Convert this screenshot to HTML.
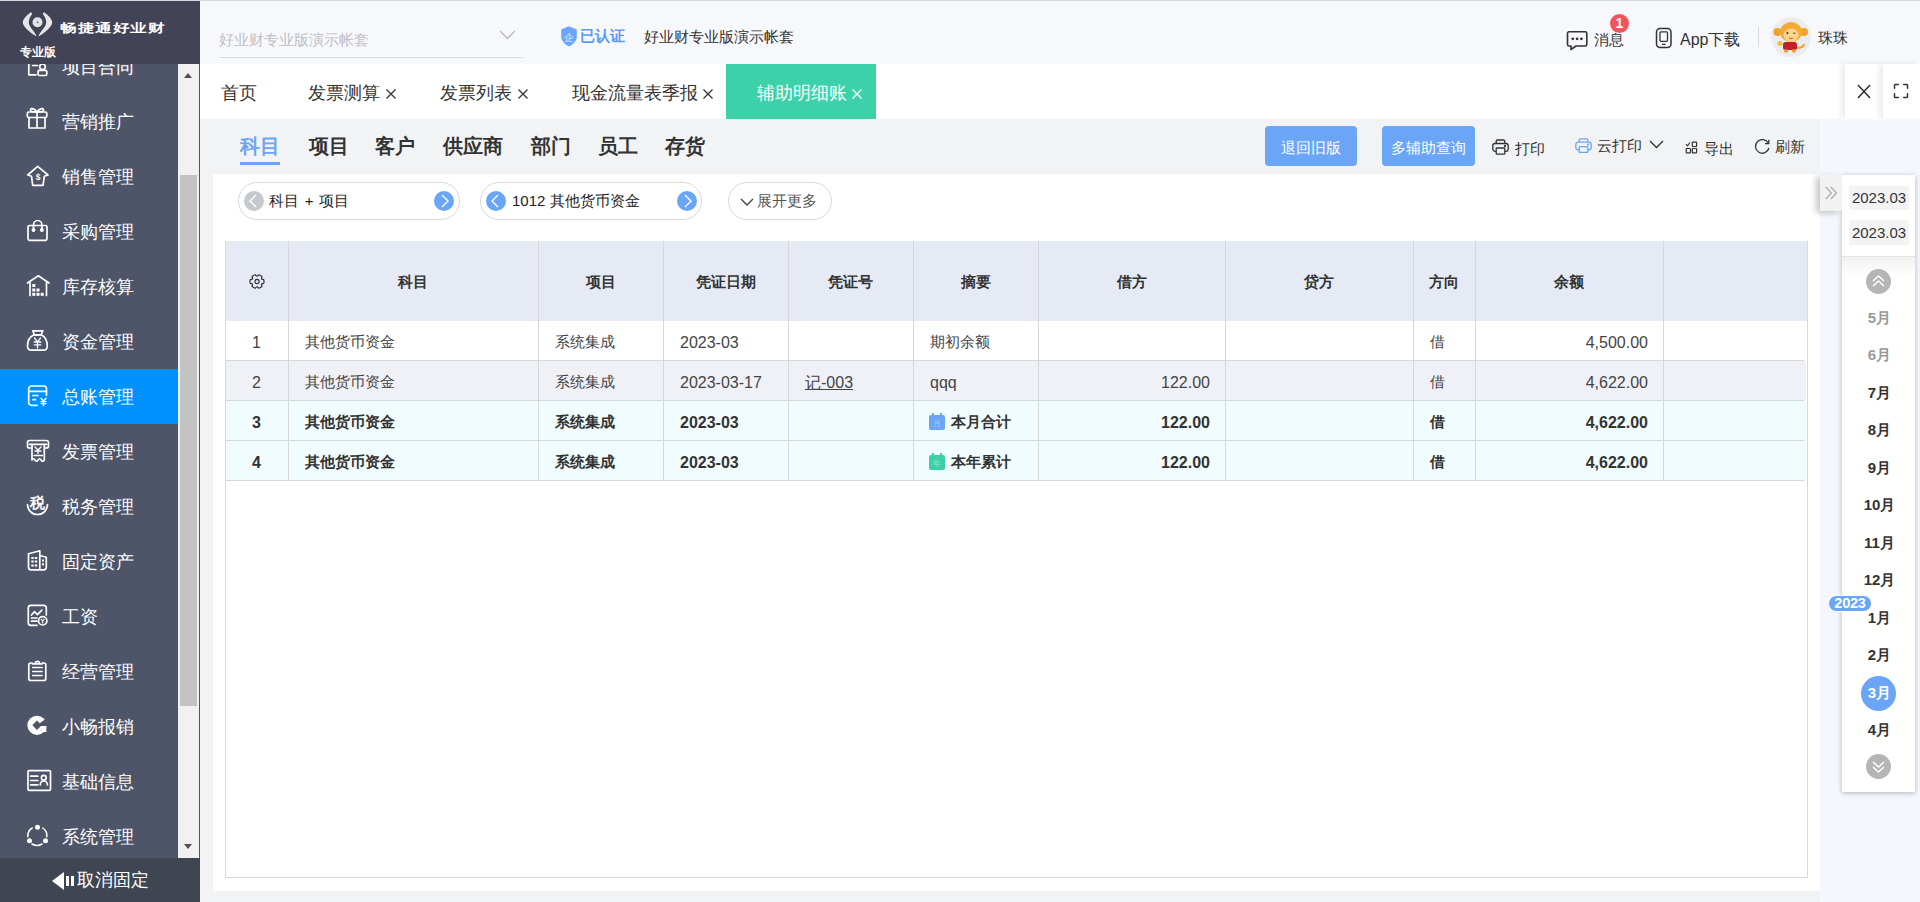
<!DOCTYPE html>
<html><head><meta charset="utf-8">
<style>
*{box-sizing:border-box;margin:0;padding:0}
html,body{width:1920px;height:902px;overflow:hidden}
body{position:relative;background:#f2f3f5;font-family:"Liberation Sans",sans-serif;color:#333}
.a{position:absolute;white-space:nowrap}
/* sidebar */
#sb{left:0;top:0;width:200px;height:902px;background:#4f5568;overflow:hidden}
.mi{position:absolute;left:0;width:178px;height:55px;color:#fff;font-size:18px}
.mi span{position:absolute;left:62px;top:16px;line-height:24px}
.mi svg{position:absolute;left:22px;top:13px}
.mi.act{background:#0091ff}
/* header */
#hd{left:200px;top:1px;width:1720px;height:63px;background:#f7f8fc}
#topline{left:0;top:0;width:1920px;height:1px;background:#d7d8dc}
/* tabs */
#tb{left:200px;top:64px;width:1720px;height:55px;background:#fff}
.tab{position:absolute;top:2px;height:55px;font-size:18px;line-height:55px;color:#333}
.x{font-size:18px}
/* content */
#rt{left:1820px;top:119px;width:100px;height:783px;background:#f4f7fd}
#pn{left:213px;top:174px;width:1607px;height:717px;background:#fff}
.st{position:absolute;top:131px;font-size:20px;font-weight:bold;line-height:30px;color:#333}
.btn{position:absolute;top:126px;height:40px;background:#6aa6f5;color:#fff;font-size:15px;line-height:44px;text-align:center;border-radius:4px}
.tl{position:absolute;top:135px;font-size:15px;line-height:24px;color:#333}
.pill{position:absolute;top:182px;height:38px;border:1px solid #d9d9d9;border-radius:19px;background:#fff}
.circ{position:absolute;top:8px;width:20px;height:20px;border-radius:10px;background:#6aa6f5}
/* table */
.hl{position:absolute;background:#d6d7db}
.th{position:absolute;top:242px;height:80px;line-height:80px;font-size:15px;font-weight:bold;text-align:center;color:#333}
.td{position:absolute;height:40px;line-height:40px;font-size:15px;color:#444}
.b{font-weight:bold;color:#333}
.r{text-align:right}
.n{font-size:16px;margin-top:1px}
/* date panel */
.mo{position:absolute;left:1843px;width:73px;text-align:center;font-size:15px;font-weight:bold;color:#333;line-height:20px}
</style></head><body>

<!-- SIDEBAR -->
<div id="sb" class="a">
    <div class="mi" style="top:39px"><svg width="30" height="30" viewBox="0 0 30 30" fill="none" stroke="#fff" stroke-width="1.7" stroke-linecap="round" stroke-linejoin="round"><path d="M6.8 8V22.8H14"/><path d="M10.5 13.5H15.5"/><circle cx="20.5" cy="14.8" r="2.8"/><rect x="16" y="18.3" width="8.8" height="5.2" rx="1.5"/></svg><span>项目合同</span></div>
  <div class="mi" style="top:94px"><svg width="30" height="30" viewBox="0 0 30 30" fill="none" stroke="#fff" stroke-width="1.7" stroke-linecap="round" stroke-linejoin="round"><rect x="5.3" y="5" width="19.5" height="5.5" rx="1.5"/><path d="M7 10.5V21H23V10.5M15 5V21"/><path d="M15 5C13 2 9 0.5 8.5 2.5S10 5 15 5C20 5 22 4.5 21.5 2.5S17 2 15 5"/></svg><span>营销推广</span></div>
  <div class="mi" style="top:149px"><svg width="30" height="30" viewBox="0 0 30 30" fill="none" stroke="#fff" stroke-width="1.7" stroke-linecap="round" stroke-linejoin="round"><path d="M15.7 4.3L5.7 13L9.5 14.3L10.7 23.3H21L22.3 14.3L26 13Z"/><text x="16" y="18" font-size="8.5" font-weight="bold" fill="#fff" stroke="none" text-anchor="middle">$</text></svg><span>销售管理</span></div>
  <div class="mi" style="top:204px"><svg width="30" height="30" viewBox="0 0 30 30" fill="none" stroke="#fff" stroke-width="1.7" stroke-linecap="round" stroke-linejoin="round"><rect x="6" y="8.5" width="19" height="14.8" rx="1.5"/><path d="M11.5 12.5V8A4.2 4.5 0 0 1 19.9 8V12.5"/><circle cx="11.5" cy="13" r="1.1" fill="#fff"/><circle cx="19.9" cy="13" r="1.1" fill="#fff"/></svg><span>采购管理</span></div>
  <div class="mi" style="top:259px"><svg width="30" height="30" viewBox="0 0 30 30" fill="none" stroke="#fff" stroke-width="1.7" stroke-linecap="round" stroke-linejoin="round"><path d="M5.5 11L16.3 3.8L27 11M8 9.5V23.5M24.5 9.5V23.5"/><g fill="#fff" stroke="none"><rect x="10.3" y="12" width="3" height="3"/><rect x="10.3" y="16.5" width="3" height="3"/><rect x="14.5" y="16.5" width="3" height="3"/><rect x="10.3" y="20.8" width="3" height="3"/><rect x="14.5" y="20.8" width="3" height="3"/><rect x="18.7" y="20.8" width="3" height="3"/></g></svg><span>库存核算</span></div>
  <div class="mi" style="top:314px"><svg width="30" height="30" viewBox="0 0 30 30" fill="none" stroke="#fff" stroke-width="1.7" stroke-linecap="round" stroke-linejoin="round"><path d="M10.8 3.8H20.8L19.2 7.8H12.4Z"/><path d="M12 7.8C7 10 5.5 15 5.5 19C5.5 22 7 23.2 9.5 23.2H21.5C24 23.2 25.3 22 25.3 19C25.3 15 24 10 19 7.8Z"/><path d="M12.5 11L15.5 14.8L18.5 11M15.5 14.8V21M12.2 15H18.8M12.2 17.8H18.8" stroke-width="1.3"/></svg><span>资金管理</span></div>
  <div class="mi act" style="top:369px"><svg width="30" height="30" viewBox="0 0 30 30" fill="none" stroke="#fff" stroke-width="1.7" stroke-linecap="round" stroke-linejoin="round"><path d="M15 23.3H9.5A2.8 2.8 0 0 1 6.7 20.5V6.8A2.8 2.8 0 0 1 9.5 4H21.7A2.8 2.8 0 0 1 24.5 6.8V13.3M6.7 9.3H24.5M11 13.5H15.8M11 17.7H13.5"/><path d="M19 16.3L21.5 19L24 16.3M21.5 19V23.8M19 19.6H24M19 21.6H24" stroke-width="1.4"/></svg><span>总账管理</span></div>
  <div class="mi" style="top:424px"><svg width="30" height="30" viewBox="0 0 30 30" fill="none" stroke="#fff" stroke-width="1.7" stroke-linecap="round" stroke-linejoin="round"><path d="M9.3 11H7.5A2 2 0 0 1 5.5 9V5.5A2 2 0 0 1 7.5 3.5H24.5A2 2 0 0 1 26.5 5.5V9A2 2 0 0 1 24.5 11H22.8M7.5 7.3H24.5"/><path d="M10 7.5V23Q11.5 20.5 13 23T16 23T19 23T22.3 23V7.5"/><path d="M13 10L16 13L19 10M16 13V16.5M13 14H19M12 18.5H20.5" stroke-width="1.3"/></svg><span>发票管理</span></div>
  <div class="mi" style="top:479px"><svg width="30" height="30" viewBox="0 0 30 30" fill="none" stroke="#fff" stroke-width="1.7" stroke-linecap="round" stroke-linejoin="round"><path d="M5.5 12.5A10 10 0 0 0 25.5 12.5"/><text x="15.3" y="16" font-size="15" font-weight="bold" fill="#fff" stroke="none" text-anchor="middle">税</text></svg><span>税务管理</span></div>
  <div class="mi" style="top:534px"><svg width="30" height="30" viewBox="0 0 30 30" fill="none" stroke="#fff" stroke-width="1.7" stroke-linecap="round" stroke-linejoin="round"><path d="M17.8 22.8H9A2.5 2.5 0 0 1 6.5 20.3V6.8L17.8 3.8V22.8M17.8 8.5L24.3 10.3V20.3A2.5 2.5 0 0 1 21.8 22.8H17.8"/><g fill="#fff" stroke="none"><rect x="9.3" y="10" width="2.4" height="2"/><rect x="12.8" y="10" width="2.4" height="2"/><rect x="9.3" y="13.5" width="2.4" height="2"/><rect x="12.8" y="13.5" width="2.4" height="2"/><rect x="9.3" y="17.5" width="2.4" height="2"/><rect x="12.8" y="17.5" width="2.4" height="2"/><rect x="20" y="12.5" width="2" height="2"/><rect x="20" y="16.3" width="2" height="2"/></g></svg><span>固定资产</span></div>
  <div class="mi" style="top:589px"><svg width="30" height="30" viewBox="0 0 30 30" fill="none" stroke="#fff" stroke-width="1.7" stroke-linecap="round" stroke-linejoin="round"><path d="M15 23.3H8.8A2.5 2.5 0 0 1 6.3 20.8V5.8A2.5 2.5 0 0 1 8.8 3.3H21.8A2.5 2.5 0 0 1 24.3 5.8V13"/><path d="M9.5 13L12.3 9.7L15.5 12.6L19.8 8.2M9.5 16H15M9.5 19.2H15"/><circle cx="20.7" cy="18.8" r="4.2"/><path d="M19.3 17.3L20.7 18.8L22.1 17.3M20.7 18.8V21" stroke-width="1.1"/></svg><span>工资</span></div>
  <div class="mi" style="top:644px"><svg width="30" height="30" viewBox="0 0 30 30" fill="none" stroke="#fff" stroke-width="1.7" stroke-linecap="round" stroke-linejoin="round"><path d="M10.3 6H8.8A2 2 0 0 0 6.8 8V21.5A2 2 0 0 0 8.8 23.5H21.8A2 2 0 0 0 23.8 21.5V8A2 2 0 0 0 21.8 6H20.3M10.3 6.8H20.3M13.3 6.5A2 2 0 0 1 17.5 6.5"/><path d="M10.8 10.5H20M10.8 14.5H20M10.8 18.5H20"/></svg><span>经营管理</span></div>
  <div class="mi" style="top:699px"><svg width="30" height="30" viewBox="0 0 30 30" fill="none" stroke="#fff" stroke-width="1.7" stroke-linecap="round" stroke-linejoin="round"><circle cx="15" cy="13.3" r="9.6" fill="#fff" stroke="none"/><path d="M15 13.3L27 4.5V14H19Z" fill="#4f5568" stroke="none"/><rect x="19" y="14" width="5.3" height="6" fill="#fff" stroke="none"/><path d="M15 8.6L19.7 13.3L15 18L10.3 13.3Z" fill="#4f5568" stroke="none"/></svg><span>小畅报销</span></div>
  <div class="mi" style="top:754px"><svg width="30" height="30" viewBox="0 0 30 30" fill="none" stroke="#fff" stroke-width="1.7" stroke-linecap="round" stroke-linejoin="round"><rect x="6" y="3.6" width="22.5" height="19.8" rx="1.2"/><path d="M8.6 9.2H15.8M8.6 13.5H15.8M8.6 17.8H15.8"/><circle cx="21.8" cy="10.8" r="2.4"/><path d="M18.2 17.8A3.6 3.8 0 0 1 25.4 17.8"/></svg><span>基础信息</span></div>
  <div class="mi" style="top:809px"><svg width="30" height="30" viewBox="0 0 30 30" fill="none" stroke="#fff" stroke-width="1.7" stroke-linecap="round" stroke-linejoin="round"><path d="M10.2 6A9.3 9.3 0 0 0 5.8 14.8M20.8 6A9.3 9.3 0 0 1 24.8 14.8M10 22A9.3 9.3 0 0 0 20 22" stroke-width="1.5"/><g fill="#fff" stroke="none"><circle cx="15.5" cy="5.2" r="2.5"/><circle cx="7.5" cy="18.8" r="2.5"/><circle cx="23.5" cy="18.8" r="2.5"/></g></svg><span>系统管理</span></div>
  <!-- header -->
  <div class="a" style="left:0;top:1px;width:200px;height:63px;background:#424356"></div>
  <svg class="a" style="left:15px;top:5px" width="45" height="36" viewBox="0 0 45 36"><path d="M16 7.3C12 10 7.8 14 7.8 17.5C7.8 21 14 27 21.5 31.5C20.5 27 13.8 22 13.8 17.5C13.8 14.5 15 11.5 17.3 8.7Z" fill="#e6e6e8"/><path d="M29 7.3C33 10 37.2 14 37.2 17.5C37.2 21 31 27 23.5 31.5C24.5 27 31.2 22 31.2 17.5C31.2 14.5 30 11.5 27.7 8.7Z" fill="#e6e6e8"/><circle cx="22.5" cy="17.3" r="5" fill="#e4e4e6"/><circle cx="22.5" cy="17.3" r="0.9" fill="#5a5b6e"/></svg>
  <div class="a" style="left:60px;top:18px;font-size:17px;font-weight:bold;color:#fff;line-height:20px;letter-spacing:0.6px;transform:scaleY(0.72);transform-origin:0 50%">畅捷通好业财</div>
  <div class="a" style="left:20px;top:44px;font-size:12px;font-weight:bold;color:#fff;line-height:16px">专业版</div>
  <!-- scrollbar -->
  <div class="a" style="left:178px;top:64px;width:21px;height:794px;background:#f1f1f1"></div>
  <div class="a" style="left:180px;top:175px;width:17px;height:531px;background:#c3c3c3"></div>
  <div class="a" style="left:184px;top:73px;width:0;height:0;border-left:4.5px solid transparent;border-right:4.5px solid transparent;border-bottom:5px solid #505050"></div>
  <div class="a" style="left:184px;top:844px;width:0;height:0;border-left:4.5px solid transparent;border-right:4.5px solid transparent;border-top:5px solid #505050"></div>
  <!-- bottom -->
  <div class="a" style="left:0;top:858px;width:200px;height:44px;background:#3f4551"></div>
  <svg class="a" style="left:52px;top:872px" width="24" height="18" viewBox="0 0 24 18"><path d="M0 9L12 0v18z" fill="#fff"/><rect x="14" y="4" width="3" height="10" fill="#fff"/><rect x="19" y="4" width="3" height="10" fill="#fff"/></svg>
  <div class="a" style="left:77px;top:868px;font-size:18px;color:#fff;line-height:24px">取消固定</div>
</div>

<!-- HEADER -->
<div id="hd" class="a">
  <div class="a" style="left:19px;top:29px;font-size:15px;color:#c0c0c4;line-height:20px">好业财专业版演示帐套</div>
  <div class="a" style="left:19px;top:56px;width:304px;height:1px;background:#dcdde2"></div>
  <svg class="a" style="left:299px;top:29px" width="17" height="10" viewBox="0 0 17 10"><path d="M1 1l7.5 7.5L16 1" fill="none" stroke="#b8b8bc" stroke-width="1.3"/></svg>
  <svg class="a" style="left:360px;top:25px" width="18" height="21" viewBox="0 0 18 21"><path d="M9 0.3L16.8 3.6V10.5C16.8 15 13 18.5 9 20.5C5 18.5 1.2 15 1.2 10.5V3.6Z" fill="#6aa6f5"/><text x="9" y="14.5" font-size="10" fill="#e3eeff" text-anchor="middle">企</text></svg>
  <div class="a" style="left:380px;top:25px;font-size:15px;color:#5a9af4;line-height:20px;font-weight:bold">已认证</div>
  <div class="a" style="left:444px;top:26px;font-size:15px;color:#333;line-height:20px">好业财专业版演示帐套</div>
  <!-- right -->
  <svg class="a" style="left:1366px;top:29px" width="22" height="22" viewBox="0 0 22 22"><path d="M3 1.8H19.3A1.5 1.5 0 0 1 20.8 3.3V14.5A1.5 1.5 0 0 1 19.3 16H10L5 19.5V16H3A1.5 1.5 0 0 1 1.5 14.5V3.3A1.5 1.5 0 0 1 3 1.8Z" fill="none" stroke="#333" stroke-width="1.6" stroke-linejoin="round"/><circle cx="6.8" cy="8.8" r="1.4" fill="#333"/><circle cx="11.1" cy="8.8" r="1.4" fill="#333"/><circle cx="15.4" cy="8.8" r="1.4" fill="#333"/></svg>
  <div class="a" style="left:1394px;top:29px;font-size:15px;color:#333;line-height:20px">消息</div>
  <div class="a" style="left:1410px;top:13px;width:19px;height:19px;border-radius:10px;background:#f5535b;color:#fff;font-size:14px;font-weight:bold;text-align:center;line-height:19px">1</div>
  <svg class="a" style="left:1455px;top:26px" width="18" height="22" viewBox="0 0 18 22"><rect x="1.5" y="1.5" width="14.5" height="19" rx="3.5" fill="none" stroke="#333" stroke-width="1.5"/><rect x="5" y="4.8" width="7.5" height="9.5" rx="1" fill="none" stroke="#333" stroke-width="1.3"/><path d="M7 17.3h3.5" stroke="#333" stroke-width="1.3"/></svg>
  <div class="a" style="left:1480px;top:29px;font-size:16px;color:#333;line-height:20px">App下载</div>
  <div class="a" style="left:1558px;top:26px;width:1px;height:20px;background:#d9d9d9"></div>
  <div class="a" style="left:1571px;top:16px;width:40px;height:40px;border-radius:20px;background:#ececec;overflow:hidden">
    <svg width="40" height="40" viewBox="0 0 40 40"><circle cx="6.5" cy="15" r="4" fill="#f0a22a"/><circle cx="33" cy="15" r="4" fill="#f0a22a"/><ellipse cx="20" cy="15" rx="11" ry="10" fill="#f4ab35"/><ellipse cx="20" cy="18" rx="7.5" ry="6.5" fill="#fbd58e"/><ellipse cx="16.5" cy="16" rx="1" ry="1.2" fill="#5a4a3a"/><path d="M22 16.2h2.5" stroke="#5a4a3a" stroke-width="1"/><path d="M18 21q2 1.5 4 0" stroke="#c06020" stroke-width="1" fill="none"/><path d="M25 31c5 0 8-1 8-4" stroke="#f0a22a" stroke-width="2" fill="none"/><rect x="12" y="25" width="14" height="8" rx="2.5" fill="#c02028"/><circle cx="9" cy="26.5" r="2.5" fill="#f5c040"/><ellipse cx="15" cy="34" rx="2.2" ry="1.8" fill="#f0a22a"/><ellipse cx="23" cy="34" rx="2.2" ry="1.8" fill="#f0a22a"/></svg>
  </div>
  <div class="a" style="left:1618px;top:27px;font-size:15px;color:#333;line-height:20px">珠珠</div>
</div>

<!-- TABS -->
<div id="tb" class="a">
  <div class="a" style="left:526px;top:0;width:150px;height:55px;background:#3dd1aa"></div>
  <div class="tab" style="left:21px">首页</div>
  <div class="tab" style="left:108px">发票测算</div><svg class="a" style="left:186px;top:25px" width="10" height="10" viewBox="0 0 10 10"><path d="M0.5 0.5l9 9M9.5 0.5l-9 9" stroke="#333" stroke-width="1.3"/></svg>
  <div class="tab" style="left:240px">发票列表</div><svg class="a" style="left:318px;top:25px" width="10" height="10" viewBox="0 0 10 10"><path d="M0.5 0.5l9 9M9.5 0.5l-9 9" stroke="#333" stroke-width="1.3"/></svg>
  <div class="tab" style="left:372px">现金流量表季报</div><svg class="a" style="left:503px;top:25px" width="10" height="10" viewBox="0 0 10 10"><path d="M0.5 0.5l9 9M9.5 0.5l-9 9" stroke="#333" stroke-width="1.3"/></svg>
  <div class="tab" style="left:557px;color:#fff">辅助明细账</div><svg class="a" style="left:652px;top:25px" width="10" height="10" viewBox="0 0 10 10"><path d="M0.5 0.5l9 9M9.5 0.5l-9 9" stroke="#fff" stroke-width="1.3"/></svg>
  <div class="a" style="left:1645px;top:0;width:38px;height:55px;background:#fff;box-shadow:-4px 0 6px rgba(0,0,0,0.08)"></div>
  <div class="a" style="left:1683px;top:0;width:37px;height:55px;background:#fff;box-shadow:-4px 0 6px rgba(0,0,0,0.08)"></div>
  <svg class="a" style="left:1657px;top:20px" width="14" height="15" viewBox="0 0 14 15"><path d="M1 1l12 13M13 1L1 14" stroke="#333" stroke-width="1.6"/></svg>
  <svg class="a" style="left:1693px;top:19px" width="16" height="16" viewBox="0 0 16 16" fill="none" stroke="#333" stroke-width="1.5" stroke-linecap="round" stroke-linejoin="round"><path d="M1.5 5.3V2.3A0.8 0.8 0 0 1 2.3 1.5H5.3M10.7 1.5H13.7A0.8 0.8 0 0 1 14.5 2.3V5.3M14.5 10.7V13.7A0.8 0.8 0 0 1 13.7 14.5H10.7M5.3 14.5H2.3A0.8 0.8 0 0 1 1.5 13.7V10.7"/></svg>
</div>

<!-- CONTENT -->
<div id="rt" class="a"></div>
<div class="st" style="left:240px;color:#6aa6f5">科目</div>
<div class="a" style="left:240px;top:162px;width:40px;height:3px;background:#6aa6f5"></div>
<div class="st" style="left:309px">项目</div>
<div class="st" style="left:375px">客户</div>
<div class="st" style="left:443px">供应商</div>
<div class="st" style="left:531px">部门</div>
<div class="st" style="left:598px">员工</div>
<div class="st" style="left:665px">存货</div>

<div class="btn" style="left:1265px;width:92px">退回旧版</div>
<div class="btn" style="left:1382px;width:93px">多辅助查询</div>
<svg class="a" style="left:1492px;top:139px" width="17" height="16" viewBox="0 0 17 16" fill="none" stroke="#333" stroke-width="1.3"><path d="M4.2 4.5V2.2A1.2 1.2 0 0 1 5.4 1H11.6A1.2 1.2 0 0 1 12.8 2.2V4.5"/><path d="M4.2 12.3H3A2.2 2.2 0 0 1 0.8 10.1V6.7A2.2 2.2 0 0 1 3 4.5H14A2.2 2.2 0 0 1 16.2 6.7V10.1A2.2 2.2 0 0 1 14 12.3H12.8"/><rect x="4.2" y="9" width="8.6" height="6.2" rx="0.8"/><circle cx="13" cy="7" r="0.5" fill="#333"/></svg>
<div class="tl" style="left:1515px;top:137px">打印</div>
<svg class="a" style="left:1575px;top:138px" width="17" height="15" viewBox="0 0 17 15" fill="none" stroke="#6aa6f5" stroke-width="1.3"><path d="M4.2 4.2V2A1.2 1.2 0 0 1 5.4 0.8H11.6A1.2 1.2 0 0 1 12.8 2V4.2"/><path d="M4.2 11.8H3A2.2 2.2 0 0 1 0.8 9.6V6.4A2.2 2.2 0 0 1 3 4.2H14A2.2 2.2 0 0 1 16.2 6.4V9.6A2.2 2.2 0 0 1 14 11.8H12.8"/><rect x="4.2" y="8.6" width="8.6" height="5.8" rx="0.8"/><circle cx="13" cy="6.6" r="0.5" fill="#6aa6f5"/></svg>
<div class="tl" style="left:1597px;top:134px">云打印</div>
<svg class="a" style="left:1649px;top:140px" width="15" height="9" viewBox="0 0 15 9"><path d="M1 1l6.5 6.5L14 1" fill="none" stroke="#333" stroke-width="1.4"/></svg>
<svg class="a" style="left:1685px;top:141px" width="13" height="13" viewBox="0 0 13 13" fill="none" stroke="#333" stroke-width="1.2"><path d="M1 3.2L2.5 4.8L5 1.5"/><rect x="7.3" y="1.2" width="4.3" height="4.3" rx="0.6"/><rect x="1.2" y="7.5" width="4.3" height="4.3" rx="0.6"/><rect x="7.3" y="7.5" width="4.3" height="4.3" rx="0.6"/></svg>
<div class="tl" style="left:1704px;top:137px">导出</div>
<svg class="a" style="left:1754px;top:138px" width="17" height="17" viewBox="0 0 17 17" fill="none" stroke="#333" stroke-width="1.3"><path d="M14.3 5.2A6.8 6.8 0 1 0 14.9 10"/><path d="M14.8 1.8V5.6H11" stroke-linejoin="miter"/></svg>
<div class="tl" style="left:1775px">刷新</div>

<div id="pn" class="a"></div>
<div class="pill" style="left:238px;width:222px">
  <div class="circ" style="left:5px;background:#c5c8cd"><svg width="20" height="20" viewBox="0 0 20 20"><path d="M12 4l-6 6 6 6" fill="none" stroke="#fff" stroke-width="1.4"/></svg></div>
  <div class="a" style="left:30px;top:8px;font-size:15px;line-height:20px;color:#222;word-spacing:1.5px">科目 + 项目</div>
  <div class="circ" style="left:195px"><svg width="20" height="20" viewBox="0 0 20 20"><path d="M8 4l6 6-6 6" fill="none" stroke="#fff" stroke-width="1.4"/></svg></div>
</div>
<div class="pill" style="left:480px;width:222px">
  <div class="circ" style="left:5px"><svg width="20" height="20" viewBox="0 0 20 20"><path d="M12 4l-6 6 6 6" fill="none" stroke="#fff" stroke-width="1.4"/></svg></div>
  <div class="a" style="left:31px;top:8px;font-size:15px;line-height:20px;color:#222">1012 其他货币资金</div>
  <div class="circ" style="left:196px"><svg width="20" height="20" viewBox="0 0 20 20"><path d="M8 4l6 6-6 6" fill="none" stroke="#fff" stroke-width="1.4"/></svg></div>
</div>
<div class="pill" style="left:728px;width:104px">
  <svg class="a" style="left:11px;top:15px" width="14" height="9" viewBox="0 0 14 9"><path d="M1 1l6 6 6-6" fill="none" stroke="#444" stroke-width="1.4"/></svg>
  <div class="a" style="left:28px;top:8px;font-size:15px;line-height:20px;color:#555">展开更多</div>
</div>

<!-- TABLE -->
<div class="a" style="left:225px;top:241px;width:1583px;height:80px;background:#e6eaf5"></div>
<div class="a" style="left:226px;top:361px;width:1580px;height:39px;background:#f0f1f6"></div>
<div class="a" style="left:226px;top:401px;width:1580px;height:79px;background:#f1fcfe"></div>
<div class="a" style="left:225px;top:241px;width:1583px;height:637px;border:1px solid #d9d9d9;border-top:none"></div>
<!-- horizontal lines -->
<div class="hl" style="left:225px;top:360px;width:1579px;height:1px"></div>
<div class="hl" style="left:225px;top:400px;width:1579px;height:1px"></div>
<div class="hl" style="left:225px;top:440px;width:1579px;height:1px"></div>
<div class="hl" style="left:225px;top:480px;width:1579px;height:1px"></div>
<!-- vertical lines -->
<div class="hl" style="left:288px;top:241px;width:1px;height:239px"></div>
<div class="hl" style="left:538px;top:241px;width:1px;height:239px"></div>
<div class="hl" style="left:663px;top:241px;width:1px;height:239px"></div>
<div class="hl" style="left:788px;top:241px;width:1px;height:239px"></div>
<div class="hl" style="left:913px;top:241px;width:1px;height:239px"></div>
<div class="hl" style="left:1038px;top:241px;width:1px;height:239px"></div>
<div class="hl" style="left:1225px;top:241px;width:1px;height:239px"></div>
<div class="hl" style="left:1413px;top:241px;width:1px;height:239px"></div>
<div class="hl" style="left:1475px;top:241px;width:1px;height:239px"></div>
<div class="hl" style="left:1663px;top:241px;width:1px;height:239px"></div>

<svg class="a" style="left:248.5px;top:274px" width="16" height="15" viewBox="0 0 16 15" fill="none" stroke="#333" stroke-width="1.2" stroke-linejoin="round"><path d="M14.73 5.57 A7.0 7.0 0 0 1 14.73 9.43 Q11.38 9.45 13.04 12.36 A7.0 7.0 0 0 1 9.69 14.29 Q8.00 11.40 6.31 14.29 A7.0 7.0 0 0 1 2.96 12.36 Q4.62 9.45 1.27 9.43 A7.0 7.0 0 0 1 1.27 5.57 Q4.62 5.55 2.96 2.64 A7.0 7.0 0 0 1 6.31 0.71 Q8.00 3.60 9.69 0.71 A7.0 7.0 0 0 1 13.04 2.64 Q11.38 5.55 14.73 5.57 Z"/><circle cx="8" cy="7.5" r="2.1"/></svg>
<div class="th" style="left:288px;width:250px">科目</div>
<div class="th" style="left:538px;width:125px">项目</div>
<div class="th" style="left:663px;width:125px">凭证日期</div>
<div class="th" style="left:788px;width:125px">凭证号</div>
<div class="th" style="left:913px;width:125px">摘要</div>
<div class="th" style="left:1038px;width:187px">借方</div>
<div class="th" style="left:1225px;width:188px">贷方</div>
<div class="th" style="left:1413px;width:62px">方向</div>
<div class="th" style="left:1475px;width:188px">余额</div>

<!-- rows -->
<div class="td n" style="left:225px;top:322px;width:63px;text-align:center">1</div>
<div class="td" style="left:305px;top:322px">其他货币资金</div>
<div class="td" style="left:555px;top:322px">系统集成</div>
<div class="td n" style="left:680px;top:322px">2023-03</div>
<div class="td" style="left:930px;top:322px">期初余额</div>
<div class="td" style="left:1430px;top:322px">借</div>
<div class="td n r" style="left:1475px;top:322px;width:173px">4,500.00</div>

<div class="td n" style="left:225px;top:362px;width:63px;text-align:center">2</div>
<div class="td" style="left:305px;top:362px">其他货币资金</div>
<div class="td" style="left:555px;top:362px">系统集成</div>
<div class="td n" style="left:680px;top:362px">2023-03-17</div>
<div class="td n" style="left:805px;top:362px;text-decoration:underline">记-003</div>
<div class="td n" style="left:930px;top:362px">qqq</div>
<div class="td n r" style="left:1038px;top:362px;width:172px">122.00</div>
<div class="td" style="left:1430px;top:362px">借</div>
<div class="td n r" style="left:1475px;top:362px;width:173px">4,622.00</div>

<div class="td n b" style="left:225px;top:402px;width:63px;text-align:center">3</div>
<div class="td b" style="left:305px;top:402px">其他货币资金</div>
<div class="td b" style="left:555px;top:402px">系统集成</div>
<div class="td n b" style="left:680px;top:402px">2023-03</div>
<svg class="a" style="left:929px;top:413px" width="16" height="17" viewBox="0 0 16 17"><rect x="0" y="2" width="16" height="15" rx="2" fill="#6aa6f5"/><rect x="3" y="0" width="2" height="4" fill="#6aa6f5"/><rect x="11" y="0" width="2" height="4" fill="#6aa6f5"/><text x="8" y="13" font-size="8" fill="#a9c9f8" text-anchor="middle">月</text></svg>
<div class="td b" style="left:951px;top:402px">本月合计</div>
<div class="td n b r" style="left:1038px;top:402px;width:172px">122.00</div>
<div class="td b" style="left:1430px;top:402px">借</div>
<div class="td n b r" style="left:1475px;top:402px;width:173px">4,622.00</div>

<div class="td n b" style="left:225px;top:442px;width:63px;text-align:center">4</div>
<div class="td b" style="left:305px;top:442px">其他货币资金</div>
<div class="td b" style="left:555px;top:442px">系统集成</div>
<div class="td n b" style="left:680px;top:442px">2023-03</div>
<svg class="a" style="left:929px;top:453px" width="16" height="17" viewBox="0 0 16 17"><rect x="0" y="2" width="16" height="15" rx="2" fill="#3dcfa5"/><rect x="3" y="0" width="2" height="4" fill="#3dcfa5"/><rect x="11" y="0" width="2" height="4" fill="#3dcfa5"/><text x="8" y="13" font-size="8" fill="#9ee6cf" text-anchor="middle">年</text></svg>
<div class="td b" style="left:951px;top:442px">本年累计</div>
<div class="td n b r" style="left:1038px;top:442px;width:172px">122.00</div>
<div class="td b" style="left:1430px;top:442px">借</div>
<div class="td n b r" style="left:1475px;top:442px;width:173px">4,622.00</div>

<!-- DATE PANEL -->
<div class="a" style="left:1842px;top:175px;width:73px;height:617px;background:#fff;box-shadow:0 1px 5px rgba(0,0,0,0.28)"></div>
<div class="a" style="left:1842px;top:256px;width:73px;height:20px;background:linear-gradient(rgba(0,0,0,0.06),rgba(0,0,0,0))"></div>
<div class="a" style="left:1842px;top:256px;width:73px;height:1px;background:#e2e2e2"></div>
<div class="a" style="left:1820px;top:175px;width:22px;height:36px;background:#f2f2f2;box-shadow:-4px 2px 6px rgba(0,0,0,0.22)"></div>
<svg class="a" style="left:1825px;top:186px" width="14" height="15" viewBox="0 0 14 15" fill="none" stroke="#a8a8b0" stroke-width="1.1"><path d="M0.8 1L6.5 7L0.8 13M5.8 1L11.5 7L5.8 13"/></svg>
<div class="a" style="left:1849px;top:186px;width:60px;height:24px;background:#f3f3f3;border-radius:2px;font-size:15px;line-height:24px;text-align:center;color:#333">2023.03</div>
<div class="a" style="left:1849px;top:220px;width:60px;height:25px;background:#f3f3f3;border-radius:2px;font-size:15px;line-height:25px;text-align:center;color:#333">2023.03</div>
<div class="a" style="left:1866px;top:269px;width:25px;height:25px;border-radius:13px;background:#b5b5b5"><svg width="25" height="25" viewBox="0 0 25 25" fill="none" stroke="#fff" stroke-width="1.6"><path d="M7 12l5.5-5 5.5 5M7 17l5.5-5 5.5 5"/></svg></div>
<div class="mo" style="top:308px;color:#999">5月</div>
<div class="mo" style="top:345px;color:#999">6月</div>
<div class="mo" style="top:383px">7月</div>
<div class="mo" style="top:420px">8月</div>
<div class="mo" style="top:458px">9月</div>
<div class="mo" style="top:495px">10月</div>
<div class="mo" style="top:533px">11月</div>
<div class="mo" style="top:570px">12月</div>
<div class="mo" style="top:608px">1月</div>
<div class="mo" style="top:645px">2月</div>
<div class="a" style="left:1861px;top:676px;width:35px;height:35px;border-radius:18px;background:#6aa6f5"></div>
<div class="mo" style="top:683px;color:#fff">3月</div>
<div class="mo" style="top:720px">4月</div>
<div class="a" style="left:1866px;top:754px;width:25px;height:25px;border-radius:13px;background:#b5b5b5"><svg width="25" height="25" viewBox="0 0 25 25" fill="none" stroke="#fff" stroke-width="1.6"><path d="M7 8l5.5 5 5.5-5M7 13l5.5 5 5.5-5"/></svg></div>
<div class="a" style="left:1828px;top:595px;width:44px;height:17px;border-radius:9px;background:#6aa6f5;border:1.5px solid #fff;color:#fff;font-size:14.5px;font-weight:bold;line-height:14px;text-align:center;letter-spacing:-0.2px">2023</div>

<div id="topline" class="a"></div>
</body></html>
